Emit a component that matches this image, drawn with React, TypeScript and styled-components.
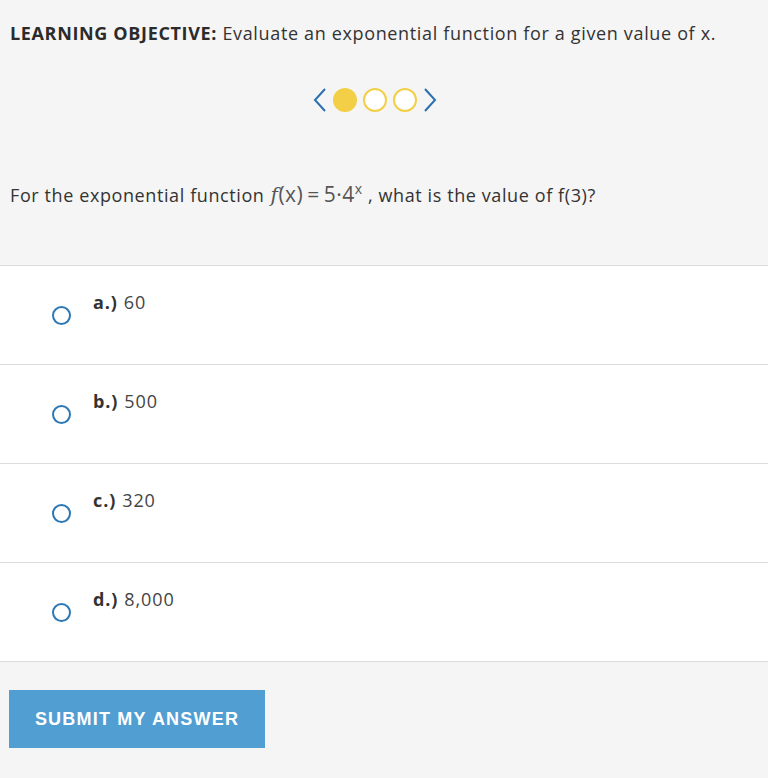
import styled, { createGlobalStyle } from 'styled-components';

const GlobalStyle = createGlobalStyle`
  html, body {
    margin: 0;
    padding: 0;
    background: #f5f5f5;
  }
  body {
    font-family: 'Open Sans', Lato, sans-serif;
    color: #333;
  }
`;

const Page = styled.div`
  width: 768px;
  min-height: 778px;
  background: #f5f5f5;
`;

const Objective = styled.p`
  margin: 0;
  padding: 21px 10px 0;
  font-size: 18px;
  line-height: 24px;
  color: #333;
  letter-spacing: 0.65px;
  white-space: nowrap;
`;

const Strong = styled.b`
  font-weight: 700;
  color: #2b2b2b;
`;

const Pager = styled.div`
  display: flex;
  justify-content: center;
  align-items: center;
  gap: 6px;
  margin-top: 40px;
  height: 30px;
  padding-right: 18px;
`;

const Dot = styled.span<{ $active?: boolean }>`
  width: 24px;
  height: 24px;
  box-sizing: border-box;
  border-radius: 50%;
  border: 2px solid #f3cf47;
  background: ${(p) => (p.$active ? '#f3cf47' : '#fff')};
`;

const Chevron = styled.svg`
  width: 14px;
  height: 26px;
`;

const Question = styled.p`
  margin: 0;
  padding: 62px 10px 0;
  height: 88px;
  font-size: 18px;
  line-height: 24px;
  color: #333;
  letter-spacing: 0.6px;
  white-space: nowrap;
`;

const Math = styled.span`
  font-weight: 400;
  color: #555;
  font-size: 21px;
  letter-spacing: 0.5px;
  margin-left: 6px;
`;

const Fn = styled.i`
  font-family: 'DejaVu Serif', serif;
  font-style: italic;
  font-size: 20px;
`;

const Sup = styled.sup`
  font-size: 14px;
`;

const Choices = styled.ul`
  list-style: none;
  margin: 0;
  padding: 0;
  background: #fff;
  border-top: 1px solid #dcdcdc;
`;

const Choice = styled.li`
  height: 98px;
  border-bottom: 1px solid #dcdcdc;
  display: grid;
  grid-template-columns: 93px 1fr;
  align-items: start;
`;

const Radio = styled.span`
  width: 19px;
  height: 19px;
  box-sizing: border-box;
  border: 2px solid #2b78b6;
  border-radius: 50%;
  margin: 40px 0 0 52px;
`;

const ChoiceText = styled.span`
  margin-top: 24px;
  font-size: 18px;
  line-height: 24px;
  color: #444;
  font-weight: 400;
  letter-spacing: 0.9px;
`;

const ChoiceLabel = styled.b`
  font-weight: 700;
  color: #333;
  margin-right: 6px;
`;

const Footer = styled.div`
  padding: 28px 9px 29px;
`;

const SubmitButton = styled.button`
  width: 256px;
  height: 58px;
  border: none;
  background: #519ed2;
  color: #fff;
  font-family: 'Liberation Sans', Arial, sans-serif;
  font-weight: 700;
  font-size: 18px;
  letter-spacing: 1.2px;
  text-transform: uppercase;
  cursor: pointer;
  padding: 0;
`;

const choices = [
  { label: 'a.)', value: '60' },
  { label: 'b.)', value: '500' },
  { label: 'c.)', value: '320' },
  { label: 'd.)', value: '8,000' },
];

const App = () => (
  <Page>
    <GlobalStyle />
    <Objective>
      <Strong>LEARNING OBJECTIVE:</Strong> Evaluate an exponential function for a
      given value of x.
    </Objective>
    <Pager>
      <Chevron viewBox="0 0 14 26">
        <path d="M12 2 L2 13 L12 24" fill="none" stroke="#2d6fae" strokeWidth="2" />
      </Chevron>
      <Dot $active />
      <Dot />
      <Dot />
      <Chevron viewBox="0 0 14 26">
        <path d="M2 2 L12 13 L2 24" fill="none" stroke="#2d6fae" strokeWidth="2" />
      </Chevron>
    </Pager>
    <Question>
      For the exponential function
      <Math>
        <Fn>f</Fn>(x)&thinsp;=&thinsp;5·4<Sup>x</Sup>
      </Math>{' '}
      , what is the value of f(3)?
    </Question>
    <Choices>
      {choices.map((c) => (
        <Choice key={c.label}>
          <Radio />
          <ChoiceText>
            <ChoiceLabel>{c.label}</ChoiceLabel>
            {c.value}
          </ChoiceText>
        </Choice>
      ))}
    </Choices>
    <Footer>
      <SubmitButton>Submit my answer</SubmitButton>
    </Footer>
  </Page>
);

export default App;
